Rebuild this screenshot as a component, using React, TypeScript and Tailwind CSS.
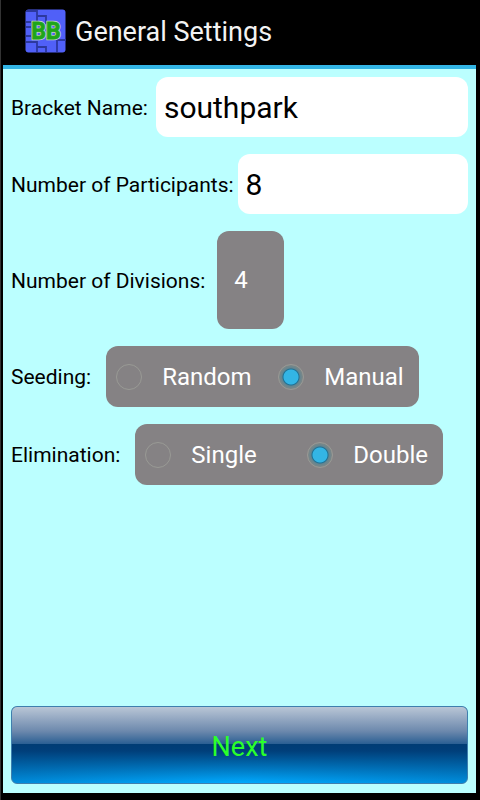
import { useState, type ReactNode } from "react";

/** Launcher icon: a blue bracket tile with a double B over it. */
function BracketLogo() {
  return (
    <svg aria-hidden viewBox="0 0 42 44" className="h-11 w-[42px] shrink-0">
      <rect x="0.5" y="0.5" width="40" height="43" rx="3" fill="#5060f8" />
      <path
        d="M1 2h11v11M12 7h9v8M1 13h5M1 18h5M1 27h5M1 33h11v10M12 38h9v5M32 43V31M32 31h9"
        fill="none"
        stroke="#2c389f"
        strokeWidth="1.8"
      />
      <g
        textAnchor="middle"
        fontFamily="Roboto, sans-serif"
        fontWeight="bold"
        fontSize="23"
      >
        <text x="21" y="30" fill="#c3d2b8" stroke="#c3d2b8" strokeWidth="2.4">
          BB
        </text>
        <text aria-hidden x="21" y="30" fill="#1fa51a" stroke="#1fa51a" strokeWidth="0.8">
          BB
        </text>
      </g>
    </svg>
  );
}

type ChoiceProps = {
  name: string;
  label: string;
  checked: boolean;
  onSelect: () => void;
  className?: string;
};

function Choice({ name, label, checked, onSelect, className = "" }: ChoiceProps) {
  return (
    <label className={`flex items-center gap-5 ${className}`}>
      <input
        type="radio"
        name={name}
        checked={checked}
        onChange={onSelect}
        className="size-[26px] shrink-0 appearance-none rounded-full border border-[#999a95] checked:bg-[radial-gradient(circle,#33b5e5_0_7px,#1f6f92_8px,#628590_9px,#7f8787_12px)]"
      />
      {label}
    </label>
  );
}

function ChoiceGroup({ label, children }: { label: string; children: ReactNode }) {
  return (
    <div className="flex items-center gap-[15px]">
      <span className="pt-0.5 whitespace-nowrap">{label}</span>
      <div
        role="radiogroup"
        aria-label={label}
        className="flex h-[61px] items-center rounded-xl bg-[#858284] pr-[15px] pl-[10px] text-2xl text-white"
      >
        {children}
      </div>
    </div>
  );
}

export default function App() {
  const [name, setName] = useState("southpark");
  const [participants, setParticipants] = useState("8");
  const [divisions, setDivisions] = useState("4");
  const [seeding, setSeeding] = useState("manual");
  const [elimination, setElimination] = useState("double");

  return (
    <div className="flex min-h-screen flex-col border-l border-[#333333] bg-black pr-1 pb-[7px] pl-[2px] font-['Roboto',sans-serif] text-[21px] text-black">
      <header className="flex h-[65px] items-center gap-2 pb-1 pl-[22px]">
        <BracketLogo />
        <h1 className="pt-1 text-[27px] text-[#f3f3f3]">General Settings</h1>
      </header>

      <form
        className="flex grow flex-col gap-[17px] border-t-4 border-[#33b5e5] bg-[#bbffff] px-2 pt-2 pb-[9px]"
        onSubmit={(e) => e.preventDefault()}
      >
        <div className="flex items-center gap-2">
          <label htmlFor="name" className="pt-1 whitespace-nowrap">
            Bracket Name:
          </label>
          <input
            id="name"
            value={name}
            onChange={(e) => setName(e.target.value)}
            className="h-[60px] min-w-0 grow rounded-xl bg-white px-2 text-3xl"
          />
        </div>

        <div className="flex items-center gap-1">
          <label htmlFor="participants" className="pt-1 whitespace-nowrap">
            Number of Participants:
          </label>
          <input
            id="participants"
            inputMode="numeric"
            value={participants}
            onChange={(e) => setParticipants(e.target.value)}
            className="h-[60px] min-w-0 grow rounded-xl bg-white px-2 text-3xl"
          />
        </div>

        <div className="flex items-center gap-3">
          <label htmlFor="divisions" className="pt-1 whitespace-nowrap">
            Number of Divisions:
          </label>
          <select
            id="divisions"
            value={divisions}
            onChange={(e) => setDivisions(e.target.value)}
            className="h-[98px] w-[67px] appearance-none rounded-xl bg-[#858284] px-[17px] text-2xl text-white"
          >
            <option>1</option>
            <option>2</option>
            <option>4</option>
          </select>
        </div>

        <ChoiceGroup label="Seeding:">
          <Choice
            name="seeding"
            label="Random"
            checked={seeding === "random"}
            onSelect={() => setSeeding("random")}
            className="w-[162px]"
          />
          <Choice
            name="seeding"
            label="Manual"
            checked={seeding === "manual"}
            onSelect={() => setSeeding("manual")}
          />
        </ChoiceGroup>

        <ChoiceGroup label="Elimination:">
          <Choice
            name="elimination"
            label="Single"
            checked={elimination === "single"}
            onSelect={() => setElimination("single")}
            className="w-[162px]"
          />
          <Choice
            name="elimination"
            label="Double"
            checked={elimination === "double"}
            onSelect={() => setElimination("double")}
          />
        </ChoiceGroup>

        {/* Glossy top half, then a glow rising from the bottom edge. */}
        <button
          type="submit"
          className="mt-auto h-[78px] rounded-md border border-[#3f7fae] bg-[linear-gradient(#b9c6d6_0,#6d89ad_24px,#2a5f93_37px,transparent_37px),linear-gradient(#003c74_37px,#003f7a_44px,transparent),radial-gradient(ellipse_at_bottom,#00aaff,#0080cc)] pt-1 text-[27px] text-[#2bff2b]"
        >
          Next
        </button>
      </form>
    </div>
  );
}
